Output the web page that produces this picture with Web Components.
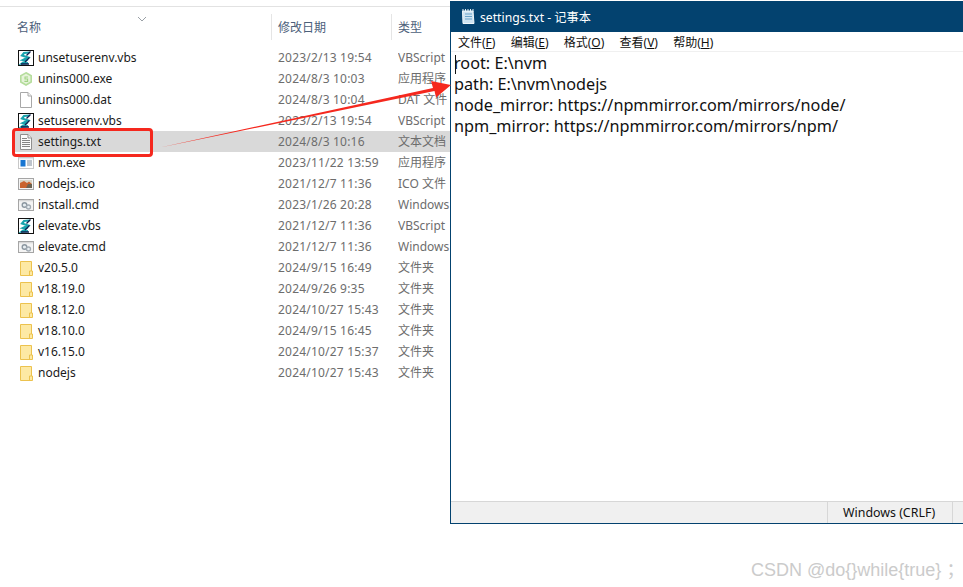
<!DOCTYPE html>
<html>
<head>
<meta charset="utf-8">
<title>settings.txt</title>
<style>
    html, body { margin: 0; background: #fff; }
    body {
        position: relative;
        width: 963px;
        height: 587px;
        overflow: hidden;
        font-family: "Noto Sans", "Noto Sans CJK SC", sans-serif;
    }
</style>
</head>
<body>
<file-list>
    <file-row icon="vbs" date="2023/2/13 19:54" type="VBScript">unsetuserenv.vbs</file-row>
    <file-row icon="node" date="2024/8/3 10:03" type="应用程序">unins000.exe</file-row>
    <file-row icon="dat" date="2024/8/3 10:04" type="DAT 文件">unins000.dat</file-row>
    <file-row icon="vbs" date="2023/2/13 19:54" type="VBScript">setuserenv.vbs</file-row>
    <file-row icon="txt" date="2024/8/3 10:16" type="文本文档" selected>settings.txt</file-row>
    <file-row icon="exe" date="2023/11/22 13:59" type="应用程序">nvm.exe</file-row>
    <file-row icon="ico" date="2021/12/7 11:36" type="ICO 文件">nodejs.ico</file-row>
    <file-row icon="cmd" date="2023/1/26 20:28" type="Windows">install.cmd</file-row>
    <file-row icon="vbs" date="2021/12/7 11:36" type="VBScript">elevate.vbs</file-row>
    <file-row icon="cmd" date="2021/12/7 11:36" type="Windows">elevate.cmd</file-row>
    <file-row icon="folder" date="2024/9/15 16:49" type="文件夹">v20.5.0</file-row>
    <file-row icon="folder" date="2024/9/26 9:35" type="文件夹">v18.19.0</file-row>
    <file-row icon="folder" date="2024/10/27 15:43" type="文件夹">v18.12.0</file-row>
    <file-row icon="folder" date="2024/9/15 16:45" type="文件夹">v18.10.0</file-row>
    <file-row icon="folder" date="2024/10/27 15:37" type="文件夹">v16.15.0</file-row>
    <file-row icon="folder" date="2024/10/27 15:43" type="文件夹">nodejs</file-row>
</file-list>
<notepad-window title="settings.txt - 记事本" encoding="Windows (CRLF)">root: E:\nvm
path: E:\nvm\nodejs
node_mirror: https://npmmirror.com/mirrors/node/
npm_mirror: https://npmmirror.com/mirrors/npm/</notepad-window>
<red-callout></red-callout>
<csdn-mark>CSDN @do{}while{true} ；</csdn-mark>

<script>
const icons = {
    vbs: `<rect x=".5" y=".5" width="15" height="15" fill="#fff" stroke="#111"/>
        <path d="M11.5 2.5 L6 3 L4 5.5 L10 7.5 L5 10 L8 10.5 L4 13.5 L10 13" fill="none" stroke="#17a3ad" stroke-width="2.2"/>
        <path d="M12.5 1.5 L8.5 5.5 M11.5 7.5 L7 12 M3 14 H11" fill="none" stroke="#0c1f4f" stroke-width="1.3"/>`,
    node: `<path d="M8 1.8 L13.2 4.8 V11 L8 14 L2.8 11 V4.8 Z" fill="#e6f3da" stroke="#b5dd9d" stroke-width="1.6"/>
        <path d="M10 6 H7 V8 H9.6 V10.4 H6.4" fill="none" stroke="#a0d384" stroke-width="1.1"/>`,
    dat: `<path d="M2.5 .5 H10 L13.5 4 V15.5 H2.5 Z" fill="#fff" stroke="#a8a8a8"/>
        <path d="M10 .5 V4 H13.5" fill="#f2f2f2" stroke="#a8a8a8"/>`,
    txt: `<path d="M2.5 .5 H10 L13.5 4 V15.5 H2.5 Z" fill="#fbfbfb" stroke="#8f8f8f"/>
        <path d="M10 .5 V4 H13.5" fill="#eee" stroke="#8f8f8f"/>
        <path d="M4 4.5 H9 M4 6.5 H12 M4 8.5 H12 M4 10.5 H12 M4 12.5 H12" stroke="#858585"/>`,
    exe: `<rect x=".5" y="2.5" width="15" height="11" fill="#fff" stroke="#c8c8c8"/>
        <rect x="1" y="3" width="14" height="1.4" fill="#dfe6ee"/>
        <rect x="2.5" y="5" width="5" height="6.5" fill="#1976d2"/>
        <path d="M9 6 H14 M9 8 H14 M9 10 H14" stroke="#7d8a9a"/>`,
    ico: `<rect x=".5" y="2.5" width="15" height="11" fill="#f4f4f4" stroke="#a5a5a5"/>
        <rect x="2" y="4" width="12" height="8" fill="#d8d4c6"/>
        <path d="M2 12 L2 7 L6 5 L9 7 L11 5.5 L14 8 V12 Z" fill="#c9622c"/>
        <path d="M10 8 H14 V12 H8 Z" fill="#6b6250"/>`,
    cmd: `<rect x=".5" y="2.5" width="15" height="11" fill="#f4f4f4" stroke="#a5a5a5"/>
        <rect x="1" y="3" width="14" height="1.3" fill="#d8d8d8"/>
        <circle cx="6.5" cy="8" r="2.3" fill="#e8eef2" stroke="#8c97a0" stroke-width="1.4"/>
        <circle cx="10.5" cy="10" r="2" fill="#e8eef2" stroke="#a2abb3" stroke-width="1.3"/>`,
    folder: `<path d="M2.5 1.5 H13.5 V11 L14.5 11 V15.5 H2.5 Z" fill="#fde9a4" stroke="#ecc24e"/>
        <path d="M13.5 11 H11.5 V15.5" fill="none" stroke="#ecc24e"/>`
};

class FileList extends HTMLElement {
    constructor() {
        super();
        this.attachShadow({ mode: 'open' }).innerHTML = `
            <style>
                :host {
                    display: block;
                    width: 450px;
                    padding-top: 6px;
                    font: 12px "Noto Sans", "Noto Sans CJK SC", sans-serif;
                }
                .head {
                    border-top: 1px solid #e2e2e2;
                    height: 40px;
                    display: grid;
                    grid-template-columns: 271px 120px 59px;
                    color: #4c607a;
                    position: relative;
                }
                .head div { height: 26px; margin-top: 7px; line-height: 27px; padding-left: 17px; }
                .head div + div { border-left: 1px solid #e5e5e5; padding-left: 6px; }
                svg { position: absolute; left: 137px; top: 9px; }
            </style>
            <div class="head">
                <div>名称</div><div>修改日期</div><div>类型</div>
                <svg width="10" height="6" viewBox="0 0 10 6"><path d="M1 1 L5 5 L9 1" fill="none" stroke="#9aa0a6"/></svg>
            </div>
            <slot></slot>`;
    }
}

class FileRow extends HTMLElement {
    constructor() {
        super();
        this.attachShadow({ mode: 'open' });
    }

    connectedCallback() {
        const icon = icons[this.getAttribute('icon')] || '';
        this.shadowRoot.innerHTML = `
            <style>
                :host {
                    display: grid;
                    grid-template-columns: 263px 120px 52px;
                    height: 21px;
                    line-height: 21px;
                    margin-left: 15px;
                    white-space: nowrap;
                    color: #6d6d6d;
                }
                :host([selected]) { background: #d9d9d9; }
                .name { display: flex; align-items: center; gap: 4px; padding-left: 3px; color: #1a1a1a; }
                .date { letter-spacing: .2px; }
                .type { overflow: hidden; }
                svg { flex: none; }
            </style>
            <div class="name"><svg width="16" height="16" viewBox="0 0 16 16">${icon}</svg><span><slot></slot></span></div>
            <div class="date">${this.getAttribute('date')}</div>
            <div class="type">${this.getAttribute('type')}</div>`;
    }
}

class NotepadWindow extends HTMLElement {
    constructor() {
        super();
        this.attachShadow({ mode: 'open' });
    }

    connectedCallback() {
        const menus = [['文件', 'F'], ['编辑', 'E'], ['格式', 'O'], ['查看', 'V'], ['帮助', 'H']];
        this.shadowRoot.innerHTML = `
            <style>
                :host {
                    position: absolute;
                    left: 450px;
                    top: 1px;
                    width: 513px;
                    height: 523px;
                    box-sizing: border-box;
                    border-left: 1px solid #03426f;
                    border-bottom: 1px solid #03426f;
                    background: #fff;
                    display: flex;
                    flex-direction: column;
                    font: 12px "Noto Sans", "Noto Sans CJK SC", sans-serif;
                    color: #111;
                }
                .title {
                    height: 31px;
                    flex: none;
                    background: #03426f;
                    color: #fff;
                    display: flex;
                    align-items: center;
                    gap: 4px;
                    padding-left: 9px;
                    font-size: 12.2px;
                }
                .menu {
                    height: 18px;
                    flex: none;
                    display: flex;
                    gap: 15.2px;
                    align-items: center;
                    padding-left: 7px;
                    border-bottom: 1px solid #f0f0f0;
                    padding-top: 1px;
                }
                .menu u { text-underline-offset: 1px; }
                pre {
                    flex: 1;
                    margin: 0;
                    padding: 1px 0 0 3px;
                    font: 16.22px/21px "Noto Sans", sans-serif;
                    position: relative;
                }
                pre::before {
                    content: "";
                    position: absolute;
                    left: 4px;
                    top: 3px;
                    width: 1px;
                    height: 19px;
                    background: #111;
                }
                .status {
                    height: 21px;
                    flex: none;
                    border-top: 1px solid #d7d7d7;
                    background: #f0f0f0;
                    display: grid;
                    grid-template-columns: 376px 125px 1fr;
                    line-height: 21px;
                    font-size: 12.4px;
                }
                .status div + div { border-left: 1px solid #d7d7d7; padding-left: 15px; }
            </style>
            <div class="title">
                <svg width="16" height="17" viewBox="0 0 16 17">
                    <path d="M2.5 3 H13 L14 15.5 H3 Z" fill="#cfe4f2" stroke="#f2f8fb"/>
                    <path d="M5 6 H12 M5 8.5 H12 M5 11 H12" stroke="#6aa3c9"/>
                    <path d="M3 1 V4 M5.5 1 V4 M8 1 V4 M10.5 1 V4 M13 1 V4" stroke="#e8f2f8"/>
                </svg>
                <span>${this.getAttribute('title')}</span>
            </div>
            <div class="menu">${menus.map(([name, key]) => `<span>${name}(<u>${key}</u>)</span>`).join('')}</div>
            <pre><slot></slot></pre>
            <div class="status"><div></div><div>${this.getAttribute('encoding')}</div><div></div></div>`;
    }
}

// red box round the selected row, and the arrow over to the notepad window
class RedCallout extends HTMLElement {
    constructor() {
        super();
        this.attachShadow({ mode: 'open' }).innerHTML = `
            <style>
                :host { position: absolute; left: 0; top: 0; width: 963px; height: 587px; pointer-events: none; }
                .box {
                    position: absolute;
                    left: 12px;
                    top: 128px;
                    width: 141px;
                    height: 29px;
                    box-sizing: border-box;
                    border: 3px solid #f5281e;
                    border-radius: 4px;
                }
                svg { position: absolute; left: 0; top: 0; }
            </style>
            <div class="box"></div>
            <svg width="963" height="587">
                <path d="M160 147.5 L433 88 L431 81 L451 85 L436 97.5 L434.5 91 Z" fill="#f5281e"/>
            </svg>`;
    }
}

class CsdnMark extends HTMLElement {
    constructor() {
        super();
        this.attachShadow({ mode: 'open' }).innerHTML = `
            <style>
                :host {
                    position: absolute;
                    left: 751px;
                    top: 559px;
                    font: 18px/23px "Liberation Sans", "Noto Sans CJK SC", sans-serif;
                    color: #cbcbcb;
                    white-space: nowrap;
                }
            </style>
            <slot></slot>`;
    }
}

customElements.define('file-list', FileList);
customElements.define('file-row', FileRow);
customElements.define('notepad-window', NotepadWindow);
customElements.define('red-callout', RedCallout);
customElements.define('csdn-mark', CsdnMark);
</script>
</body>
</html>
